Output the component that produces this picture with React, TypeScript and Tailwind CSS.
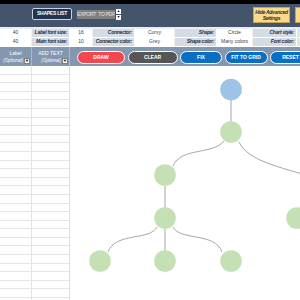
import React from 'react';

const font = "font-['Liberation_Sans',Arial,sans-serif]";

type Cell = { text: string; kind: 'val' | 'lab' | 'pad' };

const settingsRows: Cell[][] = [
  [
    { text: '40', kind: 'val' },
    { text: 'Label font size:', kind: 'lab' },
    { text: '16', kind: 'val' },
    { text: 'Connector:', kind: 'lab' },
    { text: 'Curvy', kind: 'val' },
    { text: 'Shape:', kind: 'lab' },
    { text: 'Circle', kind: 'val' },
    { text: 'Chart style:', kind: 'lab' },
    { text: '', kind: 'pad' },
  ],
  [
    { text: '40', kind: 'val' },
    { text: 'Main font size:', kind: 'lab' },
    { text: '10', kind: 'val' },
    { text: 'Connector color:', kind: 'lab' },
    { text: 'Grey', kind: 'val' },
    { text: 'Shape color:', kind: 'lab' },
    { text: 'Many colors', kind: 'val' },
    { text: 'Font color:', kind: 'lab' },
    { text: '', kind: 'pad' },
  ],
];

const buttons = [
  { label: 'DRAW', w: 'w-[48px]', bg: 'bg-[#f2474f]' },
  { label: 'CLEAR', w: 'w-[50px]', bg: 'bg-[#565656]' },
  { label: 'FIX', w: 'w-[42px]', bg: 'bg-[#0a6fc2]' },
  { label: 'FIT TO GRID', w: 'w-[43px]', bg: 'bg-[#0a6fc2]' },
  { label: 'RESET', w: 'w-[41px]', bg: 'bg-[#0a6fc2]' },
];

// node centres in page coordinates
const green = [
  [231, 132],
  [165, 175],
  [165, 218],
  [100, 261],
  [165, 261],
  [231, 261],
  [297, 218],
];

const edges = [
  'M231 100 L231 122',
  'M224 141 C213 155 181 147 173 166',
  'M239 142 C248 161 280 167 312 177',
  'M165 186 L165 208',
  'M165 229 L165 251',
  'M173 227 C180 241 215 232 222 252',
  'M157 227 C150 241 115 232 108 252',
];

const HeaderColumn = ({ title, w }: { title: string; w: string }) => (
  <div className={`${w} h-full shrink-0 border-r border-[#a9b7ca] flex flex-col items-center pt-[3px]`}>
    <span className="text-[5px] leading-[7px] text-white whitespace-nowrap">{title}</span>
    <div className="flex items-center gap-[1px] w-full justify-end pr-[1px]">
      <span className="text-[4.5px] leading-[7px] italic text-white whitespace-nowrap">(Optional)</span>
      <div className="w-[6px] h-[6px] shrink-0 bg-[#f2f2f2] border border-[#7f7f7f] flex items-center justify-center">
        <span className="text-[4px] leading-none text-black">▼</span>
      </div>
    </div>
  </div>
);

const Diagram = () => (
  <svg className="w-full h-full" viewBox="70 66 230 234" preserveAspectRatio="xMinYMin slice">
    {edges.map((d, i) => (
      <path key={i} d={d} fill="none" stroke="#a6a6a6" strokeWidth="1" />
    ))}
    <circle cx={231} cy={89.5} r={10.8} fill="#9dc3e6" />
    {green.map(([x, y], i) => (
      <circle key={i} cx={x} cy={y} r={10.8} fill="#c5e0b4" />
    ))}
  </svg>
);

const App: React.FC = () => {
  return (
    <div className={`w-[300px] h-[300px] overflow-hidden bg-white flex flex-col ${font}`}>
      <div className="h-[4px] bg-black shrink-0" />

      {/* dark header */}
      <div className="h-[23px] shrink-0 bg-[#44546a] flex items-start pl-[32px] overflow-hidden">
        <div className="shrink-0 mt-[4px] w-[40px] h-[12px] rounded-[2px] bg-[#22344f] border border-[#c9d2de] flex items-center justify-center">
          <span className="text-[5px] font-bold text-white tracking-tighter whitespace-nowrap">SHAPES LIST</span>
        </div>
        <div className="shrink-0 ml-[5px] mt-[6px] w-[38px] h-[9px] bg-[#808080] flex items-center justify-center overflow-hidden">
          <span className="text-[5px] text-[#e8e8e8] tracking-tighter whitespace-nowrap">EXPORT&nbsp; TO PDF</span>
        </div>
        <div className="shrink-0 mt-[5px] ml-[1px] w-[5px] flex flex-col gap-[1px]">
          <div className="h-[5px] bg-white flex items-center justify-center text-[3.5px] leading-none text-black">▲</div>
          <div className="h-[5px] bg-white flex items-center justify-center text-[3.5px] leading-none text-black">▼</div>
        </div>
        <div className="shrink-0 ml-[132px] mt-[3px] w-[37px] h-[16px] bg-[#fbd88a] border border-[#c7a356] flex flex-col items-center justify-center">
          <span className="text-[5px] leading-[6px] italic font-bold text-[#2b2b2b] tracking-tighter whitespace-nowrap">Hide Advanced</span>
          <span className="text-[5px] leading-[6px] italic font-bold text-[#2b2b2b] tracking-tighter">Settings</span>
        </div>
        <div className="shrink-0 ml-[5px] mt-[3px] w-[20px] h-[16px] bg-[#fbd88a] border border-[#c7a356]" />
      </div>

      <div className="h-[2px] shrink-0 bg-[#e9ecf0]" />

      {/* settings rows */}
      {settingsRows.map((row, r) => (
        <div
          key={r}
          className="h-[9px] shrink-0 grid grid-cols-[32px_38px_23px_42px_40px_42px_36px_44px_1fr] border-b border-white"
        >
          {row.map((c, i) =>
            c.kind === 'lab' ? (
              <div key={i} className="bg-[#d6dce4] border-r border-white flex items-center justify-end pr-[2px] overflow-hidden">
                <span className="text-[5px] italic font-bold text-[#1f2d45] tracking-tighter whitespace-nowrap">{c.text}</span>
              </div>
            ) : c.kind === 'pad' ? (
              <div key={i} className="bg-[#dfe8d8]" />
            ) : (
              <div key={i} className="bg-white border-r border-[#eeeeee] flex items-center justify-center">
                <span className="text-[5px] text-[#404040] whitespace-nowrap">{c.text}</span>
              </div>
            )
          )}
        </div>
      ))}

      {/* blue band with column headers and buttons */}
      <div className="h-[19px] shrink-0 bg-[#8497b0] flex items-stretch">
        <HeaderColumn title="Label" w="w-[32px]" />
        <HeaderColumn title="ADD TEXT" w="w-[38px]" />
        <div className="flex items-start pt-[4px] pl-[7px] gap-[2.5px]">
          {buttons.map((b) => (
            <div
              key={b.label}
              className={`${b.w} ${b.bg} h-[13px] shrink-0 rounded-full border-[1.5px] border-white flex items-center justify-center`}
            >
              <span className="text-[5px] font-bold text-white whitespace-nowrap">{b.label}</span>
            </div>
          ))}
        </div>
      </div>

      {/* sheet body */}
      <div className="flex-1 flex min-h-0">
        <div className="w-[70px] shrink-0 flex flex-col border-r border-[#dcdcdc]">
          {Array.from({ length: 28 }).map((_, i) => (
            <div key={i} className="h-[8.6px] shrink-0 flex border-b border-[#e4e4e4]">
              <div className="w-[32px] border-r border-[#e4e4e4]" />
              <div className="flex-1" />
            </div>
          ))}
        </div>
        <div className="flex-1 min-w-0">
          <Diagram />
        </div>
      </div>
    </div>
  );
};

export default App;
